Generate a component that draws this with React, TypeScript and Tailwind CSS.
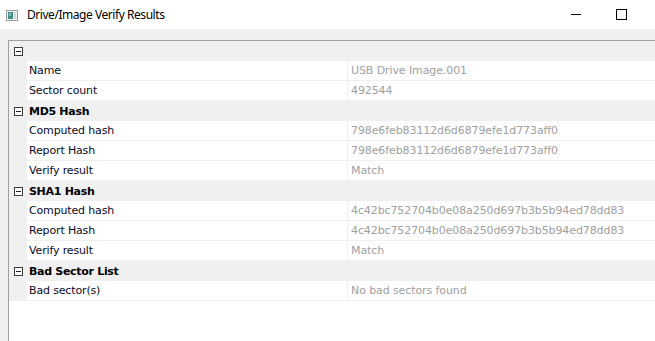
import React from "react"

type Row =
    | { kind: "cat"; label: string }
    | { kind: "prop"; label: string; value: string }

const rows: Row[] = [
    { kind: "cat", label: "" },
    { kind: "prop", label: "Name", value: "USB Drive Image.001" },
    { kind: "prop", label: "Sector count", value: "492544" },
    { kind: "cat", label: "MD5 Hash" },
    { kind: "prop", label: "Computed hash", value: "798e6feb83112d6d6879efe1d773aff0" },
    { kind: "prop", label: "Report Hash", value: "798e6feb83112d6d6879efe1d773aff0" },
    { kind: "prop", label: "Verify result", value: "Match" },
    { kind: "cat", label: "SHA1 Hash" },
    { kind: "prop", label: "Computed hash", value: "4c42bc752704b0e08a250d697b3b5b94ed78dd83" },
    { kind: "prop", label: "Report Hash", value: "4c42bc752704b0e08a250d697b3b5b94ed78dd83" },
    { kind: "prop", label: "Verify result", value: "Match" },
    { kind: "cat", label: "Bad Sector List" },
    { kind: "prop", label: "Bad sector(s)", value: "No bad sectors found" },
]

function Collapse() {
    return (
        <span className="flex h-[9px] w-[9px] items-center justify-center border border-[#3c3c3c] bg-white">
            <span className="block h-px w-[5px] bg-[#1e1e1e]" />
        </span>
    )
}

function WindowIcon() {
    return (
        <svg width="12" height="11" viewBox="0 0 12 11" aria-hidden="true">
            <rect x="0.5" y="0.5" width="11" height="10" fill="#f4f4f4" stroke="#9a9a9a" />
            <rect x="2" y="2" width="5" height="7" fill="#3f8d86" />
            <rect x="3" y="3" width="2" height="3" fill="#7fc3c0" />
            <rect x="8" y="2" width="2" height="7" fill="#d8d8d8" />
        </svg>
    )
}

export default function App() {
    return (
        <div className="flex h-[341px] w-[655px] flex-col overflow-hidden bg-white font-['DejaVu_Sans',sans-serif]">
            {/* Title bar */}
            <div className="flex h-[29px] shrink-0 items-center bg-white">
                <div className="ml-[6px] mt-[1px]">
                    <WindowIcon />
                </div>
                <span className="ml-[9px] font-['Noto_Sans',sans-serif] text-[12px] tracking-[-0.45px] text-black">
                    Drive/Image Verify Results
                </span>
                <div className="ml-auto mr-[28px] flex items-center gap-[35px]">
                    <span className="block h-px w-[10px] bg-black" />
                    <span className="block h-[11px] w-[11px] border border-black" />
                </div>
            </div>

            {/* Property grid */}
            <div className="flex flex-1 flex-col bg-[#f0f0f0] pl-[8px] pt-[11px]">
                <div className="flex-1 border-l border-t border-[#a0a0a0] bg-white">
                    {rows.map((row, i) =>
                        row.kind === "cat" ? (
                            <div key={i} className="flex h-[20px] items-center bg-[#f0f0f0]">
                                <div className="flex w-[18px] justify-center pl-[1px]">
                                    <Collapse />
                                </div>
                                <span className="pl-[2px] pt-[2px] text-[11px] font-bold tracking-[-0.3px] text-black">
                                    {row.label}
                                </span>
                            </div>
                        ) : (
                            <div key={i} className="flex h-[20px]">
                                <div className="w-[18px] shrink-0 bg-[#f0f0f0]" />
                                <div className="flex flex-1 border-b border-[#f0f0f0]">
                                    <div className="flex w-[321px] shrink-0 items-center border-r border-[#f0f0f0] pl-[2px] pt-[2px] text-[11px] tracking-[-0.15px] text-[#0a0a28]">
                                        {row.label}
                                    </div>
                                    <div className="flex flex-1 items-center pl-[3px] pt-[2px] text-[11px] tracking-[-0.1px] text-[#a0a0a0]">
                                        {row.value}
                                    </div>
                                </div>
                            </div>
                        )
                    )}
                </div>
            </div>
        </div>
    )
}
